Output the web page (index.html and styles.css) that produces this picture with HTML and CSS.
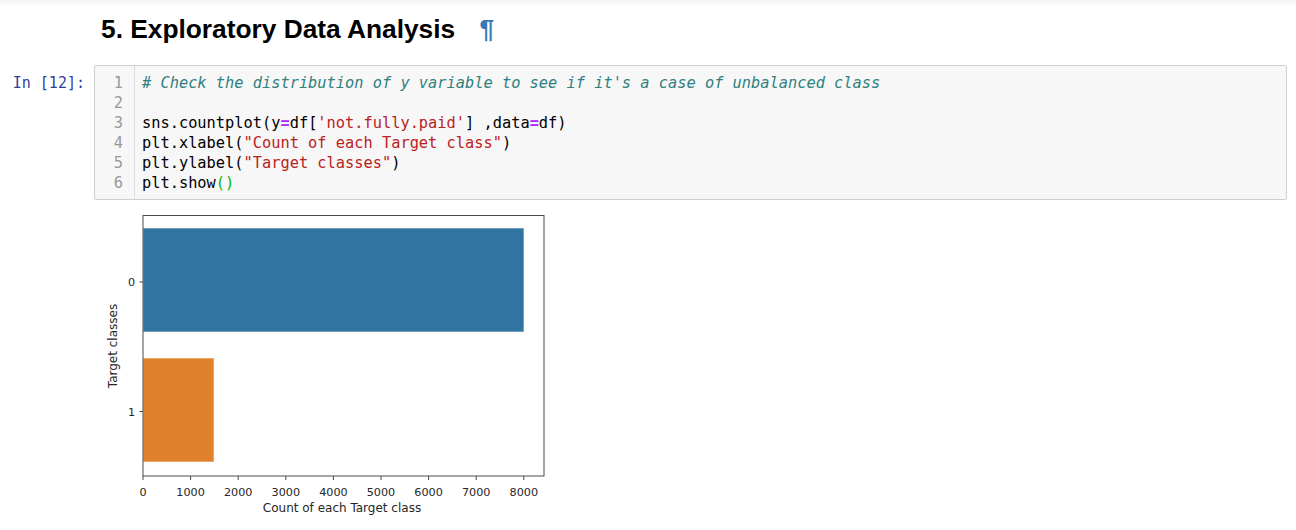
FILE: index.html
```html
<!DOCTYPE html>
<html>
<head>
<meta charset="utf-8">
<link rel="stylesheet" href="styles.css">
</head>
<body>
<div class="topbar"></div>
<div class="md-cell">
  <h2 class="heading">5. Exploratory Data Analysis <a class="anchor">¶</a></h2>
</div>
<div class="code-cell">
  <div class="prompt">In&nbsp;[12]:</div>
  <div class="input">
    <div class="gutter">
      <div>1</div><div>2</div><div>3</div><div>4</div><div>5</div><div>6</div>
    </div>
    <div class="code">
      <div class="line"><span class="cm"># Check the distribution of y variable to see if it's a case of unbalanced class</span></div>
      <div class="line"> </div>
      <div class="line">sns.countplot(y<span class="op">=</span>df[<span class="str">'not.fully.paid'</span>] ,data<span class="op">=</span>df)</div>
      <div class="line">plt.xlabel(<span class="str">"Count of each Target class"</span>)</div>
      <div class="line">plt.ylabel(<span class="str">"Target classes"</span>)</div>
      <div class="line">plt.show<span class="mb">()</span></div>
    </div>
  </div>
</div>
<div class="output">
  <svg class="chart" width="460" height="320" viewBox="94 205 460 320" xmlns="http://www.w3.org/2000/svg">
    <rect x="94" y="205" width="460" height="320" fill="#ffffff"/>
    <rect x="143" y="228" width="381" height="104" fill="#3274a1" stroke="#ffffff" stroke-width="0.6"/>
    <rect x="143" y="358" width="71" height="104" fill="#e1812c" stroke="#ffffff" stroke-width="0.6"/>
    <rect x="143" y="215.5" width="401" height="260.5" fill="none" stroke="#4a4a4a" stroke-width="1"/>
    <g stroke="#4a4a4a" stroke-width="1">
      <line x1="139.5" y1="282" x2="143" y2="282"/>
      <line x1="139.5" y1="411.5" x2="143" y2="411.5"/>
      <line x1="143" y1="476" x2="143" y2="480"/>
      <line x1="190.6" y1="476" x2="190.6" y2="480"/>
      <line x1="238.2" y1="476" x2="238.2" y2="480"/>
      <line x1="285.8" y1="476" x2="285.8" y2="480"/>
      <line x1="333.4" y1="476" x2="333.4" y2="480"/>
      <line x1="381" y1="476" x2="381" y2="480"/>
      <line x1="428.6" y1="476" x2="428.6" y2="480"/>
      <line x1="476.2" y1="476" x2="476.2" y2="480"/>
      <line x1="523.8" y1="476" x2="523.8" y2="480"/>
    </g>
    <g class="ticklabels" text-anchor="middle">
      <text x="143" y="495.5">0</text>
      <text x="190.6" y="495.5">1000</text>
      <text x="238.2" y="495.5">2000</text>
      <text x="285.8" y="495.5">3000</text>
      <text x="333.4" y="495.5">4000</text>
      <text x="381" y="495.5">5000</text>
      <text x="428.6" y="495.5">6000</text>
      <text x="476.2" y="495.5">7000</text>
      <text x="523.8" y="495.5">8000</text>
    </g>
    <g class="ticklabels" text-anchor="end">
      <text x="135" y="286">0</text>
      <text x="135" y="415.5">1</text>
    </g>
    <text class="axlabel" x="342" y="512" text-anchor="middle">Count of each Target class</text>
    <text class="axlabel" x="117" y="346" text-anchor="middle" transform="rotate(-90 117 346)">Target classes</text>
  </svg>
</div>
</body>
</html>
```
FILE: styles.css
```css
html, body {
  margin: 0;
  padding: 0;
  background: #ffffff;
}
body {
  font-family: "Liberation Sans", Arial, sans-serif;
  color: #000;
}
.topbar {
  height: 5px;
  background: linear-gradient(#f3f3f3, #fbfbfb);
}
.md-cell {
  padding-left: 101px;
  padding-top: 9px;
  height: 51px;
  box-sizing: border-box;
}
.heading {
  margin: 0;
  font-family: "Liberation Sans", Arial, sans-serif;
  font-weight: bold;
  font-size: 26.3px;
  line-height: 30px;
  color: #000;
}
.anchor {
  color: #337ab7;
  margin-left: 17px;
  font-weight: bold;
}
.code-cell {
  display: flex;
  align-items: flex-start;
  margin-top: 9px;
  margin-right: 9px;
}
.prompt {
  width: 94px;
  flex: none;
  box-sizing: border-box;
  padding-right: 9px;
  padding-top: 8px;
  text-align: right;
  font-family: "DejaVu Sans Mono", monospace;
  font-size: 15px;
  line-height: 20px;
  color: #303f9f;
}
.input {
  flex: 1;
  display: flex;
  background: #f7f7f7;
  border: 1px solid #cfcfcf;
  border-radius: 2px;
  font-family: "DejaVu Sans Mono", monospace;
  font-size: 15.33px;
  line-height: 20px;
}
.gutter {
  width: 40px;
  flex: none;
  box-sizing: border-box;
  border-right: 1px solid #dddddd;
  padding: 7px 11px 6px 0;
  text-align: right;
  color: #999999;
}
.code {
  padding: 7px 0 6px 7px;
  color: #000;
}
.line {
  white-space: pre;
  height: 20px;
}
.cm {
  color: #2f8080;
  font-style: italic;
}
.str {
  color: #ba2121;
}
.op {
  color: #aa22ff;
  font-weight: bold;
}
.mb {
  color: #00bb00;
}
.output {
  padding-left: 94px;
  padding-top: 5px;
}
.chart {
  display: block;
}
.ticklabels text {
  font-family: "DejaVu Sans", sans-serif;
  font-size: 11.2px;
  fill: #262626;
}
.axlabel {
  font-family: "DejaVu Sans", sans-serif;
  font-size: 12px;
  fill: #262626;
}
```
